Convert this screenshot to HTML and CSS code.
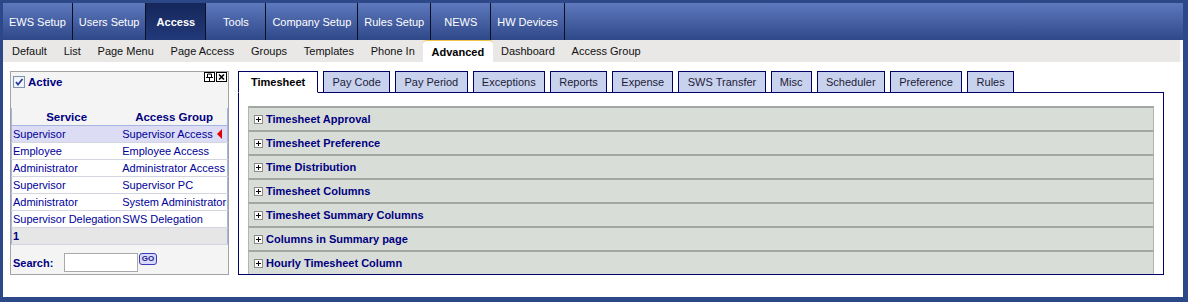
FILE: index.html
```html
<!DOCTYPE html>
<html lang="en">
  <head>
    <meta charset="UTF-8" />
    <title>Access - Advanced</title>
    <link rel="stylesheet" href="styles.css">
  </head>
  <body>
    <div class="frame">
      <div class="topnav">
        <a class="top-item">EWS Setup</a>
        <a class="top-item">Users Setup</a>
        <a class="top-item current">Access</a>
        <a class="top-item">Tools</a>
        <a class="top-item">Company Setup</a>
        <a class="top-item">Rules Setup</a>
        <a class="top-item">NEWS</a>
        <a class="top-item">HW Devices</a>
      </div>

      <div class="subnav">
        <a class="sub-item">Default</a>
        <a class="sub-item">List</a>
        <a class="sub-item">Page Menu</a>
        <a class="sub-item">Page Access</a>
        <a class="sub-item">Groups</a>
        <a class="sub-item">Templates</a>
        <a class="sub-item">Phone In</a>
        <a class="sub-item selected">Advanced</a>
        <a class="sub-item">Dashboard</a>
        <a class="sub-item">Access Group</a>
      </div>

      <div class="main">
        <!-- service / access group list -->
        <div class="panel">
          <div class="panel-head">
            <label class="active-box">
              <svg class="check" width="12" height="12" viewBox="0 0 12 12">
                <rect x="0.5" y="0.5" width="11" height="11" fill="#e6ecf6" stroke="#7f93b3" />
                <rect x="1.5" y="1.5" width="9" height="9" fill="#f4f7fb" />
                <path d="M3 6 L5 8.5 L9.5 3" fill="none" stroke="#2b3f9a" stroke-width="1.8" />
              </svg>
              Active
            </label>
            <div class="panel-tools">
              <svg width="11" height="10" viewBox="0 0 11 10">
                <rect x="0.5" y="0.5" width="10" height="9" fill="#fff" stroke="#000" />
                <path d="M3.5 2 V5.5 M7.5 2 V5.5 M3.5 2 H7.5 M2 5.5 H9 M5.5 5.5 V9" stroke="#000" fill="none" />
              </svg>
              <svg width="11" height="10" viewBox="0 0 11 10">
                <rect x="0.5" y="0.5" width="10" height="9" fill="#fff" stroke="#000" />
                <path d="M3 2.5 L8 7.5 M8 2.5 L3 7.5" stroke="#000" stroke-width="1.6" />
              </svg>
            </div>
          </div>
          <table class="list">
            <thead>
              <tr>
                <th>Service</th>
                <th>Access Group</th>
              </tr>
            </thead>
            <tbody>
              <tr class="hl">
                <td>Supervisor</td>
                <td class="marked">Supervisor Access<span class="arrow"></span></td>
              </tr>
              <tr><td>Employee</td><td>Employee Access</td></tr>
              <tr><td>Administrator</td><td>Administrator Access</td></tr>
              <tr><td>Supervisor</td><td>Supervisor PC</td></tr>
              <tr><td>Administrator</td><td>System Administrator</td></tr>
              <tr><td>Supervisor Delegation</td><td>SWS Delegation</td></tr>
              <tr class="pager"><td colspan="2">1</td></tr>
            </tbody>
          </table>
          <div class="search">
            <span class="search-label">Search:</span>
            <input class="search-input" type="text" />
            <button class="go">GO</button>
          </div>
        </div>

        <!-- advanced settings -->
        <div class="tabarea">
          <div class="tabs">
            <span class="tab on">Timesheet</span>
            <span class="tab">Pay Code</span>
            <span class="tab">Pay Period</span>
            <span class="tab">Exceptions</span>
            <span class="tab">Reports</span>
            <span class="tab">Expense</span>
            <span class="tab">SWS Transfer</span>
            <span class="tab">Misc</span>
            <span class="tab">Scheduler</span>
            <span class="tab">Preference</span>
            <span class="tab">Rules</span>
          </div>
          <div class="tab-body">
            <div class="section"><span class="plus"></span>Timesheet Approval</div>
            <div class="section"><span class="plus"></span>Timesheet Preference</div>
            <div class="section"><span class="plus"></span>Time Distribution</div>
            <div class="section"><span class="plus"></span>Timesheet Columns</div>
            <div class="section"><span class="plus"></span>Timesheet Summary Columns</div>
            <div class="section"><span class="plus"></span>Columns in Summary page</div>
            <div class="section"><span class="plus"></span>Hourly Timesheet Column</div>
          </div>
        </div>
      </div>
    </div>
  </body>
</html>
```

FILE: styles.css
```css
body {
  margin: 0;
  font-family: "Liberation Sans", Arial, sans-serif;
  font-size: 11px;
  background: #fff;
}
.frame {
  box-sizing: border-box;
  height: 302px;
  border-style: solid;
  border-color: #2d4889;
  border-width: 3px 5px 5px 3px;
  display: flex;
  flex-direction: column;
}
.topnav {
  display: flex;
  height: 37px;
  background: linear-gradient(#5e78bd, #2e4889);
}
.top-item {
  box-sizing: border-box;
  min-width: 60px;
  padding: 0 6px;
  border-right: 1px solid #0b0f22;
  color: #fff;
  display: flex;
  align-items: center;
  justify-content: center;
}
.top-item.current {
  font-weight: bold;
  background: linear-gradient(#15275a, #22397a);
}
.subnav {
  display: flex;
  height: 22px;
  background: #e9e8e6;
  border-right: 3px solid #fafafa;
}
.sub-item {
  padding: 0 8.4px;
  display: flex;
  align-items: center;
  color: #111;
}
.sub-item:first-child {
  padding-left: 9px;
}
.sub-item.selected {
  background: #fff;
  font-weight: bold;
  color: #000;
  border-top: 1px solid #f2c447;
  border-radius: 4px 4px 0 0;
}
.main {
  flex: 1;
  display: flex;
  align-items: flex-start;
  gap: 9px;
  padding: 9px 0 0 7px;
  background: #fff;
}
.panel {
  box-sizing: border-box;
  width: 219px;
  height: 204px;
  border: 1px solid #a3a3a3;
  background: #f4f4f4;
  display: flex;
  flex-direction: column;
}
.panel-head {
  height: 36px;
  display: flex;
  justify-content: space-between;
  align-items: flex-start;
}
.active-box {
  display: flex;
  align-items: center;
  gap: 3px;
  margin: 4px 0 0 2px;
  color: #000080;
  font-weight: bold;
  font-size: 11.5px;
}
.panel-tools {
  display: flex;
  gap: 1px;
  margin: 0 1px 0 0;
}
.list {
  width: 100%;
  border-collapse: collapse;
  border-left: 1px solid #a6b5de;
  border-right: 1px solid #a6b5de;
  color: #000099;
}
.list th {
  height: 17px;
  padding: 0;
  background: #f4f4f4;
  border-bottom: 1px solid #a6b5de;
  color: #000080;
  font-weight: bold;
  font-size: 11.5px;
}
.list td {
  height: 16px;
  padding: 0 0 0 1px;
  background: #fff;
  border-bottom: 1px solid #d3d6de;
  white-space: nowrap;
}
.list td:first-child {
  width: 107px;
}
.list tr.hl td {
  background: #dcdcf5;
}
.list tr.pager td {
  background: #e6e6e6;
  font-weight: bold;
  color: #000080;
}
.marked {
  position: relative;
}
.arrow {
  position: absolute;
  right: 5px;
  top: 3px;
  border-style: solid;
  border-width: 5px 5px 5px 0;
  border-color: transparent #e10000 transparent transparent;
}
.search {
  display: flex;
  align-items: flex-start;
  padding: 8px 0 0 2px;
}
.search-label {
  color: #000080;
  font-weight: bold;
  margin: 4px 0 0 0;
  width: 51px;
}
.search-input {
  box-sizing: border-box;
  width: 74px;
  height: 19px;
  margin: 0;
  border: 1px solid #a9a9a9;
  background: #fff;
}
.go {
  box-sizing: border-box;
  margin: 0 0 0 1px;
  width: 18px;
  height: 12px;
  padding: 0;
  border: 1px solid #3b3bb8;
  border-radius: 3px;
  background: #d9d9fb;
  color: #1c1c8a;
  font-family: "Liberation Sans", Arial, sans-serif;
  font-size: 8px;
  font-weight: bold;
  line-height: 10px;
}
.tabarea {
  width: 926px;
  display: flex;
  flex-direction: column;
}
.tabs {
  display: flex;
  gap: 5px;
  margin-bottom: -1px;
  position: relative;
}
.tab {
  box-sizing: border-box;
  height: 22px;
  padding: 0 8.3px;
  border: 1px solid #000066;
  background: #c9d2ec;
  color: #1b1b3a;
  display: flex;
  align-items: center;
}
.tab.on {
  padding: 0 12px;
  background: #fff;
  border-bottom-color: #fff;
  font-weight: bold;
  color: #000;
}
.tab-body {
  box-sizing: border-box;
  height: 183px;
  border: 1px solid #000066;
  padding: 13px 9px 0 9px;
}
.section {
  box-sizing: border-box;
  height: 24px;
  border-top: 2px solid #a3a7a3;
  border-left: 1px solid #b3b5b3;
  border-right: 1px solid #b3b5b3;
  background: #d9ddd8;
  display: flex;
  align-items: center;
  padding-left: 5px;
  color: #000080;
  font-weight: bold;
}
.plus {
  box-sizing: border-box;
  position: relative;
  width: 9px;
  height: 9px;
  margin-right: 3px;
  border: 1px solid #8a8a8a;
  background: #fff;
}
.plus::before,
.plus::after {
  content: "";
  position: absolute;
  background: #000;
}
.plus::before {
  left: 1px;
  top: 3px;
  width: 5px;
  height: 1px;
}
.plus::after {
  left: 3px;
  top: 1px;
  width: 1px;
  height: 5px;
}
```
